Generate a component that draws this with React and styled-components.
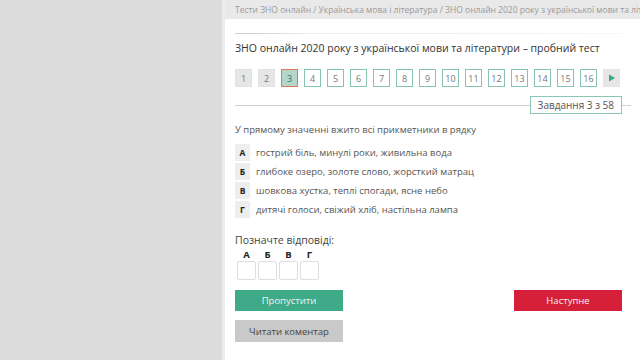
import React from 'react';
import styled, { createGlobalStyle } from 'styled-components';

const GlobalStyle = createGlobalStyle`
  html, body {
    margin: 0;
    padding: 0;
    background: #dcdcdc;
  }
  * {
    box-sizing: border-box;
  }
`;

const Page = styled.div`
  display: flex;
  width: 640px;
  height: 360px;
  overflow: hidden;
  font-family: 'Open Sans', 'DejaVu Sans', sans-serif;
`;

const Sidebar = styled.aside`
  width: 222px;
  flex-shrink: 0;
  background: #dcdcdc;
`;

const Main = styled.main`
  flex: 1;
  min-width: 0;
  background: #ffffff;
  border-left: 3px solid #ececec;
`;

const Crumbs = styled.div`
  height: 19px;
  line-height: 19px;
  padding-left: 10px;
  background: #e9e9e9;
  color: #9a9a9a;
  font-size: 8.5px;
  white-space: nowrap;
  overflow: hidden;
`;

const Content = styled.div`
  padding: 0 18px 0 10px;
`;

const TopRule = styled.div`
  height: 1px;
  margin-top: 14px;
  width: 100%;
  background: linear-gradient(to right, #cfcfcf 0, #cfcfcf 20px, #ececec 70px, #f6f6f6 100%);
`;

const Title = styled.h1`
  margin: 7px 0 0;
  font-size: 10.5px;
  font-weight: 400;
  line-height: 15px;
  color: #333;
`;

const Pager = styled.div`
  display: flex;
  gap: 6px;
  margin-top: 13px;
`;

const PageBox = styled.div`
  width: 17px;
  height: 18px;
  display: flex;
  align-items: center;
  justify-content: center;
  font-size: 9px;
  color: ${p => (p.$state === 'current' ? '#3c6f61' : '#777')};
  background: ${p =>
    p.$state === 'done' ? '#e6e6e6' : p.$state === 'current' ? '#b3d6cb' : '#ffffff'};
  border: 1px solid
    ${p =>
      p.$state === 'done' ? '#e2e2e2' : p.$state === 'current' ? '#e0785a' : '#86c4b1'};
`;

const NextBox = styled(PageBox)`
  background: #e6e6e6;
  border-color: #e6e6e6;
`;

const TaskRow = styled.div`
  display: flex;
  align-items: center;
  margin: 9px -9px 0 0;
  height: 18px;
`;

const Rule = styled.div`
  flex: 1;
  height: 1px;
  background: #cfcfcf;
`;

const Tail = styled(Rule)`
  flex: 0 0 9px;
`;

const TaskBadge = styled.div`
  height: 18px;
  padding: 0 7px;
  line-height: 16px;
  border: 1px solid #8cc6b5;
  font-size: 10px;
  color: #555;
  background: #fff;
`;

const Question = styled.p`
  margin: 9px 0 0;
  font-size: 9.5px;
  line-height: 14px;
  color: #555;
`;

const Options = styled.div`
  display: flex;
  flex-direction: column;
  gap: 2px;
  margin-top: 7px;
`;

const Option = styled.div`
  display: flex;
  align-items: center;
  gap: 6px;
  height: 17px;
  font-size: 9.5px;
  color: #555;
`;

const Letter = styled.span`
  width: 15px;
  height: 17px;
  display: flex;
  align-items: center;
  justify-content: center;
  background: #eeeeee;
  font-weight: 700;
  font-size: 8.5px;
  color: #222;
`;

const AnswerLabel = styled.div`
  margin-top: 15px;
  font-size: 10.5px;
  line-height: 14px;
  color: #444;
`;

const AnswerGrid = styled.div`
  display: grid;
  grid-template-columns: repeat(4, 19px);
  column-gap: 2px;
  margin-top: 1px;
  margin-left: 2px;
`;

const AnswerHead = styled.div`
  text-align: center;
  font-weight: 700;
  font-size: 9.5px;
  line-height: 13px;
  color: #222;
`;

const AnswerCell = styled.div`
  width: 19px;
  height: 19px;
  border: 1px solid #dedede;
  border-radius: 2px;
  background: #fff;
`;

const Actions = styled.div`
  display: flex;
  justify-content: space-between;
  margin-top: 10px;
`;

const Button = styled.button`
  width: 108px;
  height: 21px;
  border: none;
  padding: 0;
  font-family: inherit;
  font-size: 9.5px;
  color: ${p => (p.$tone === 'muted' ? '#444' : '#f2f2f2')};
  background: ${p =>
    p.$tone === 'go' ? '#3eaa88' : p.$tone === 'next' ? '#d6203a' : '#c9c9c9'};
`;

const CommentButton = styled(Button)`
  display: block;
  height: 22px;
  margin-top: 9px;
`;

const PlayIcon = () => (
  <svg width="8" height="8" viewBox="0 0 8 8">
    <path d="M1 0.5 L7 4 L1 7.5 Z" fill="#3aaa86" />
  </svg>
);

const pages = Array.from({ length: 16 }, (_, i) => i + 1);

const options = [
  ['А', 'гострий біль, минулі роки, живильна вода'],
  ['Б', 'глибоке озеро, золоте слово, жорсткий матрац'],
  ['В', 'шовкова хустка, теплі спогади, ясне небо'],
  ['Г', 'дитячі голоси, свіжий хліб, настільна лампа'],
];

const App = () => {
  return (
    <>
      <GlobalStyle />
      <Page>
        <Sidebar />
        <Main>
          <Crumbs>
            Тести ЗНО онлайн / Українська мова і література / ЗНО онлайн 2020 року з української мови та літератури – пробний тест
          </Crumbs>
          <Content>
            <TopRule />
            <Title>ЗНО онлайн 2020 року з української мови та літератури – пробний тест</Title>
            <Pager>
              {pages.map(n => (
                <PageBox key={n} $state={n < 3 ? 'done' : n === 3 ? 'current' : 'open'}>
                  {n}
                </PageBox>
              ))}
              <NextBox>
                <PlayIcon />
              </NextBox>
            </Pager>
            <TaskRow>
              <Rule />
              <TaskBadge>Завдання 3 з 58</TaskBadge>
              <Tail />
            </TaskRow>
            <Question>У прямому значенні вжито всі прикметники в рядку</Question>
            <Options>
              {options.map(([l, t]) => (
                <Option key={l}>
                  <Letter>{l}</Letter>
                  {t}
                </Option>
              ))}
            </Options>
            <AnswerLabel>Позначте відповіді:</AnswerLabel>
            <AnswerGrid>
              {options.map(([l]) => (
                <AnswerHead key={l}>{l}</AnswerHead>
              ))}
              {options.map(([l]) => (
                <AnswerCell key={l} />
              ))}
            </AnswerGrid>
            <Actions>
              <Button $tone="go">Пропустити</Button>
              <Button $tone="next">Наступне</Button>
            </Actions>
            <CommentButton $tone="muted">Читати коментар</CommentButton>
          </Content>
        </Main>
      </Page>
    </>
  );
};

export default App;
